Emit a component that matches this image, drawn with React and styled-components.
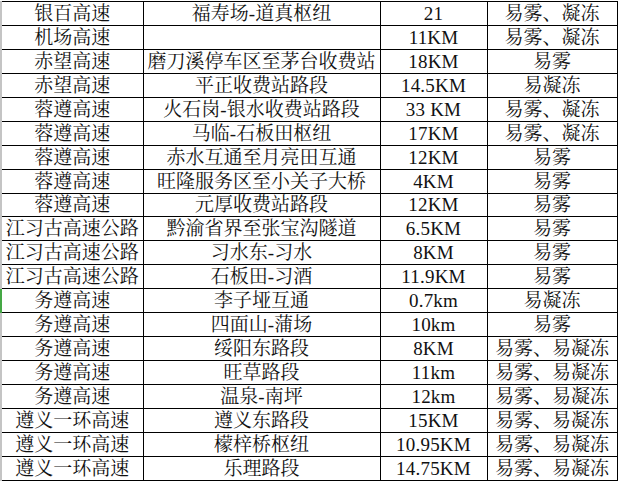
import React from "react";
import styled, { createGlobalStyle } from "styled-components";

const GlobalStyle = createGlobalStyle`
  html, body {
    margin: 0;
    padding: 0;
    background: #ffffff;
  }
  body {
    font-family: "Liberation Serif", "Noto Serif CJK SC", "Noto Sans CJK SC", serif;
  }
`;

const Sheet = styled.div`
  width: 619px;
  height: 483px;
  overflow: hidden;
  background: #ffffff;
  padding-top: 1px;
  box-sizing: border-box;
`;

const Table = styled.table`
  border-collapse: collapse;
  table-layout: fixed;
  width: 616px;
  color: #111111;
  font-size: 19px;
`;

const Col = styled.col`
  width: ${(p) => p.$w}px;
`;

const Row = styled.tr`
  height: 23.95px;
`;

const Cell = styled.td`
  border: 1px solid #000000;
  padding: 1px 0 0 0;
  height: 23.95px;
  line-height: 20px;
  text-align: center;
  white-space: nowrap;
  overflow: hidden;
  box-sizing: border-box;
  vertical-align: middle;
`;

const EdgeCell = styled(Cell)`
  border-left: 2px solid ${(p) => (p.$marked ? "#45a845" : "#c4c4c4")};
`;

const DistCell = styled(Cell)`
  font-family: "Liberation Serif", serif;
  letter-spacing: 0.2px;
`;

const rows = [
  ["银百高速", "福寿场-道真枢纽", "21", "易雾、凝冻"],
  ["机场高速", "", "11KM", "易雾、凝冻"],
  ["赤望高速", "磨刀溪停车区至茅台收费站", "18KM", "易雾"],
  ["赤望高速", "平正收费站路段", "14.5KM", "易凝冻"],
  ["蓉遵高速", "火石岗-银水收费站路段", "33 KM", "易雾、凝冻"],
  ["蓉遵高速", "马临-石板田枢纽", "17KM", "易雾、凝冻"],
  ["蓉遵高速", "赤水互通至月亮田互通", "12KM", "易雾"],
  ["蓉遵高速", "旺隆服务区至小关子大桥", "4KM", "易雾"],
  ["蓉遵高速", "元厚收费站路段", "12KM", "易雾"],
  ["江习古高速公路", "黔渝省界至张宝沟隧道", "6.5KM", "易雾"],
  ["江习古高速公路", "习水东-习水", "8KM", "易雾"],
  ["江习古高速公路", "石板田-习酒", "11.9KM", "易雾"],
  ["务遵高速", "李子垭互通", "0.7km", "易凝冻"],
  ["务遵高速", "四面山-蒲场", "10km", "易雾"],
  ["务遵高速", "绥阳东路段", "8KM", "易雾、易凝冻"],
  ["务遵高速", "旺草路段", "11km", "易雾、易凝冻"],
  ["务遵高速", "温泉-南坪", "12km", "易雾、易凝冻"],
  ["遵义一环高速", "遵义东路段", "15KM", "易雾、易凝冻"],
  ["遵义一环高速", "檬梓桥枢纽", "10.95KM", "易雾、易凝冻"],
  ["遵义一环高速", "乐理路段", "14.75KM", "易雾、易凝冻"],
];

const widths = [142, 237, 107, 130];

export default function App() {
  return (
    <>
      <GlobalStyle />
      <Sheet>
        <Table>
          <colgroup>
            {widths.map((w, i) => (
              <Col key={i} $w={w} />
            ))}
          </colgroup>
          <tbody>
            {rows.map((r, i) => (
              <Row key={i}>
                <EdgeCell $marked={i === 12}>{r[0]}</EdgeCell>
                <Cell>{r[1]}</Cell>
                <DistCell>{r[2]}</DistCell>
                <Cell>{r[3]}</Cell>
              </Row>
            ))}
          </tbody>
        </Table>
      </Sheet>
    </>
  );
}
